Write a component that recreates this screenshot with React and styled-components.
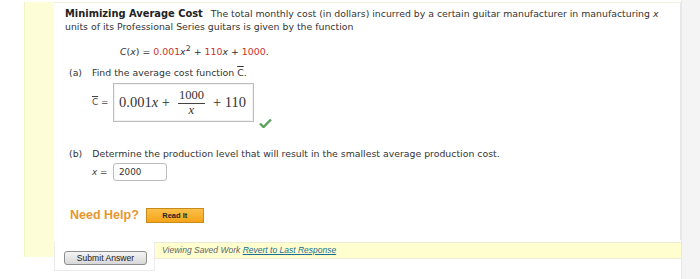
import React from 'react';
import styled, { createGlobalStyle } from 'styled-components';

const GlobalStyle = createGlobalStyle`
  html, body {
    margin: 0;
    padding: 0;
    background: #ffffff;
    font-family: "DejaVu Sans", Verdana, sans-serif;
  }
`;

const Page = styled.div`
  display: flex;
  width: 700px;
  height: 279px;
  overflow: hidden;
`;

const Gutter = styled.div`
  width: 24px;
  flex: none;
`;

const Scrollbar = styled.div`
  width: 18px;
  flex: none;
  background: #f4f4f4;
  border-left: 1px solid #e8e8e8;
`;

const Question = styled.div`
  flex: 1;
  display: flex;
  align-items: flex-start;
  padding-top: 2px;
`;

const Side = styled.div`
  width: 30px;
  height: 255px;
  flex: none;
  background: #fdfdd8;
  border-left: 1px solid #f3f3c8;
  box-sizing: border-box;
`;

const Main = styled.div`
  flex: 1;
  display: flex;
  flex-direction: column;
`;

const Body = styled.div`
  height: 238px;
  box-sizing: border-box;
  border-top: 1px solid #f0f0e0;
  border-right: 1px solid #e6e6e6;
  padding: 4px 12px 0 11px;
  font-size: 9.35px;
  color: #333;
  line-height: 13px;
`;

const Title = styled.span`
  font-weight: bold;
  font-size: 9.9px;
  color: #222;
  margin-right: 8px;
`;

const Formula = styled.div`
  margin: 9px 0 0 55px;
  font-size: 9.4px;
`;

const Red = styled.span`
  color: #c8312b;
`;

const Part = styled.div`
  margin-top: ${p => p.$top}px;
  padding-left: 4px;
  display: flex;
  gap: 10px;
`;

const AnswerRow = styled.div`
  display: flex;
  align-items: center;
  margin: ${p => p.$margin};
`;

const Label = styled.span`
  width: 21px;
  font-size: 8.8px;
  color: #444;
`;

const MathBox = styled.div`
  display: flex;
  align-items: center;
  height: 37px;
  padding: 0 7px 0 5px;
  border: 1px solid #bdbdbd;
  box-shadow: inset 0 0 0 1px #f2f2f2;
  font-family: "Liberation Serif", "Times New Roman", serif;
  font-size: 14.5px;
  color: #333;
  gap: 5px;
`;

const Frac = styled.span`
  display: inline-flex;
  flex-direction: column;
  align-items: center;
  font-size: 12.5px;
  line-height: 13px;
  margin: 0 3px;
`;

const Num = styled.span`
  border-bottom: 1px solid #444;
  padding: 0 1px 1px;
`;

const Check = styled.svg`
  align-self: flex-end;
  margin: 0 0 -6px 5px;
`;

const InputBox = styled.div`
  width: 47px;
  height: 16px;
  border: 1px solid #bdbdbd;
  border-radius: 3px;
  padding-left: 5px;
  font-size: 8.8px;
  line-height: 16px;
  color: #333;
`;

const Help = styled.div`
  display: flex;
  align-items: center;
  gap: 7px;
  margin: 27px 0 0 5px;
`;

const HelpText = styled.span`
  font-family: "Liberation Sans", Arial, sans-serif;
  font-weight: bold;
  font-size: 12.5px;
  color: #e8962e;
`;

const ReadIt = styled.span`
  display: inline-block;
  width: 56px;
  height: 13px;
  background: linear-gradient(#fbc04a, #f4a419);
  border: 1px solid #c98a1c;
  font-family: "Liberation Sans", Arial, sans-serif;
  font-weight: bold;
  font-size: 7.5px;
  line-height: 13px;
  text-align: center;
  color: #222;
`;

const Footer = styled.div`
  display: flex;
  align-items: flex-start;
  height: 17px;
  margin-top: 2px;
`;

const SubmitCell = styled.div`
  display: flex;
  align-items: flex-start;
  width: 101px;
  height: 29px;
  flex: none;
  border-left: 1px solid #ececec;
  border-right: 1px solid #ececec;
  border-bottom: 1px solid #ececec;
  background: #fff;
  padding: 9px 0 0 9px;
  box-sizing: border-box;
`;

const SubmitButton = styled.span`
  display: block;
  width: 81px;
  height: 12px;
  border: 1px solid #8d8d8d;
  border-radius: 3px;
  background: linear-gradient(#f4f4f4, #d8d8d8);
  font-family: "Liberation Sans", Arial, sans-serif;
  font-size: 8.6px;
  line-height: 12px;
  text-align: center;
  color: #222;
`;

const SavedBar = styled.div`
  flex: 1;
  height: 17px;
  box-sizing: border-box;
  background: #fefecf;
  border-top: 1px solid #ececd8;
  border-bottom: 1px solid #ececd8;
  padding-left: 7px;
  font-family: "Liberation Sans", Arial, sans-serif;
  font-style: italic;
  font-size: 8.5px;
  line-height: 14px;
  color: #666;
`;

const RevertLink = styled.span`
  color: #1c6f8e;
  text-decoration: underline;
`;

const Italic = styled.i`
  font-family: "DejaVu Sans", Verdana, sans-serif;
`;

const Overline = styled.span`
  text-decoration: overline;
`;

const CBar = () => <Overline>C</Overline>;

export default function App() {
  return (
    <>
      <GlobalStyle />
      <Page>
        <Gutter />
        <Question>
          <Side />
          <Main>
            <Body>
              <Title>Minimizing Average Cost</Title>
              The total monthly cost (in dollars) incurred by a certain guitar manufacturer in manufacturing <Italic>x</Italic> units of its Professional Series guitars is given by the function
              <Formula>
                <i>C</i>(<i>x</i>) = <Red>0.001</Red><i>x</i><sup>2</sup> + <Red>110</Red><i>x</i> + <Red>1000</Red>.
              </Formula>
              <Part $top={8}>
                <span>(a)</span>
                <span>Find the average cost function <CBar />.</span>
              </Part>
              <AnswerRow $margin="4px 0 0 27px">
                <Label><CBar /> =</Label>
                <MathBox>
                  <span>0.001<i>x</i> +</span>
                  <Frac>
                    <Num>1000</Num>
                    <i>x</i>
                  </Frac>
                  <span>+ 110</span>
                </MathBox>
                <Check width="13" height="10" viewBox="0 0 13 10">
                  <path d="M1 5.5 L4.5 9 L12 1.5" fill="none" stroke="#5aa05a" strokeWidth="2.4" />
                </Check>
              </AnswerRow>
              <Part $top={25}>
                <span>(b)</span>
                <span>Determine the production level that will result in the smallest average production cost.</span>
              </Part>
              <AnswerRow $margin="3px 0 0 27px">
                <Label><Italic>x</Italic> =</Label>
                <InputBox>2000</InputBox>
              </AnswerRow>
              <Help>
                <HelpText>Need Help?</HelpText>
                <ReadIt>Read It</ReadIt>
              </Help>
            </Body>
            <Footer>
              <SubmitCell>
                <SubmitButton>Submit Answer</SubmitButton>
              </SubmitCell>
              <SavedBar>
                Viewing Saved Work <RevertLink>Revert to Last Response</RevertLink>
              </SavedBar>
            </Footer>
          </Main>
        </Question>
        <Scrollbar />
      </Page>
    </>
  );
}
